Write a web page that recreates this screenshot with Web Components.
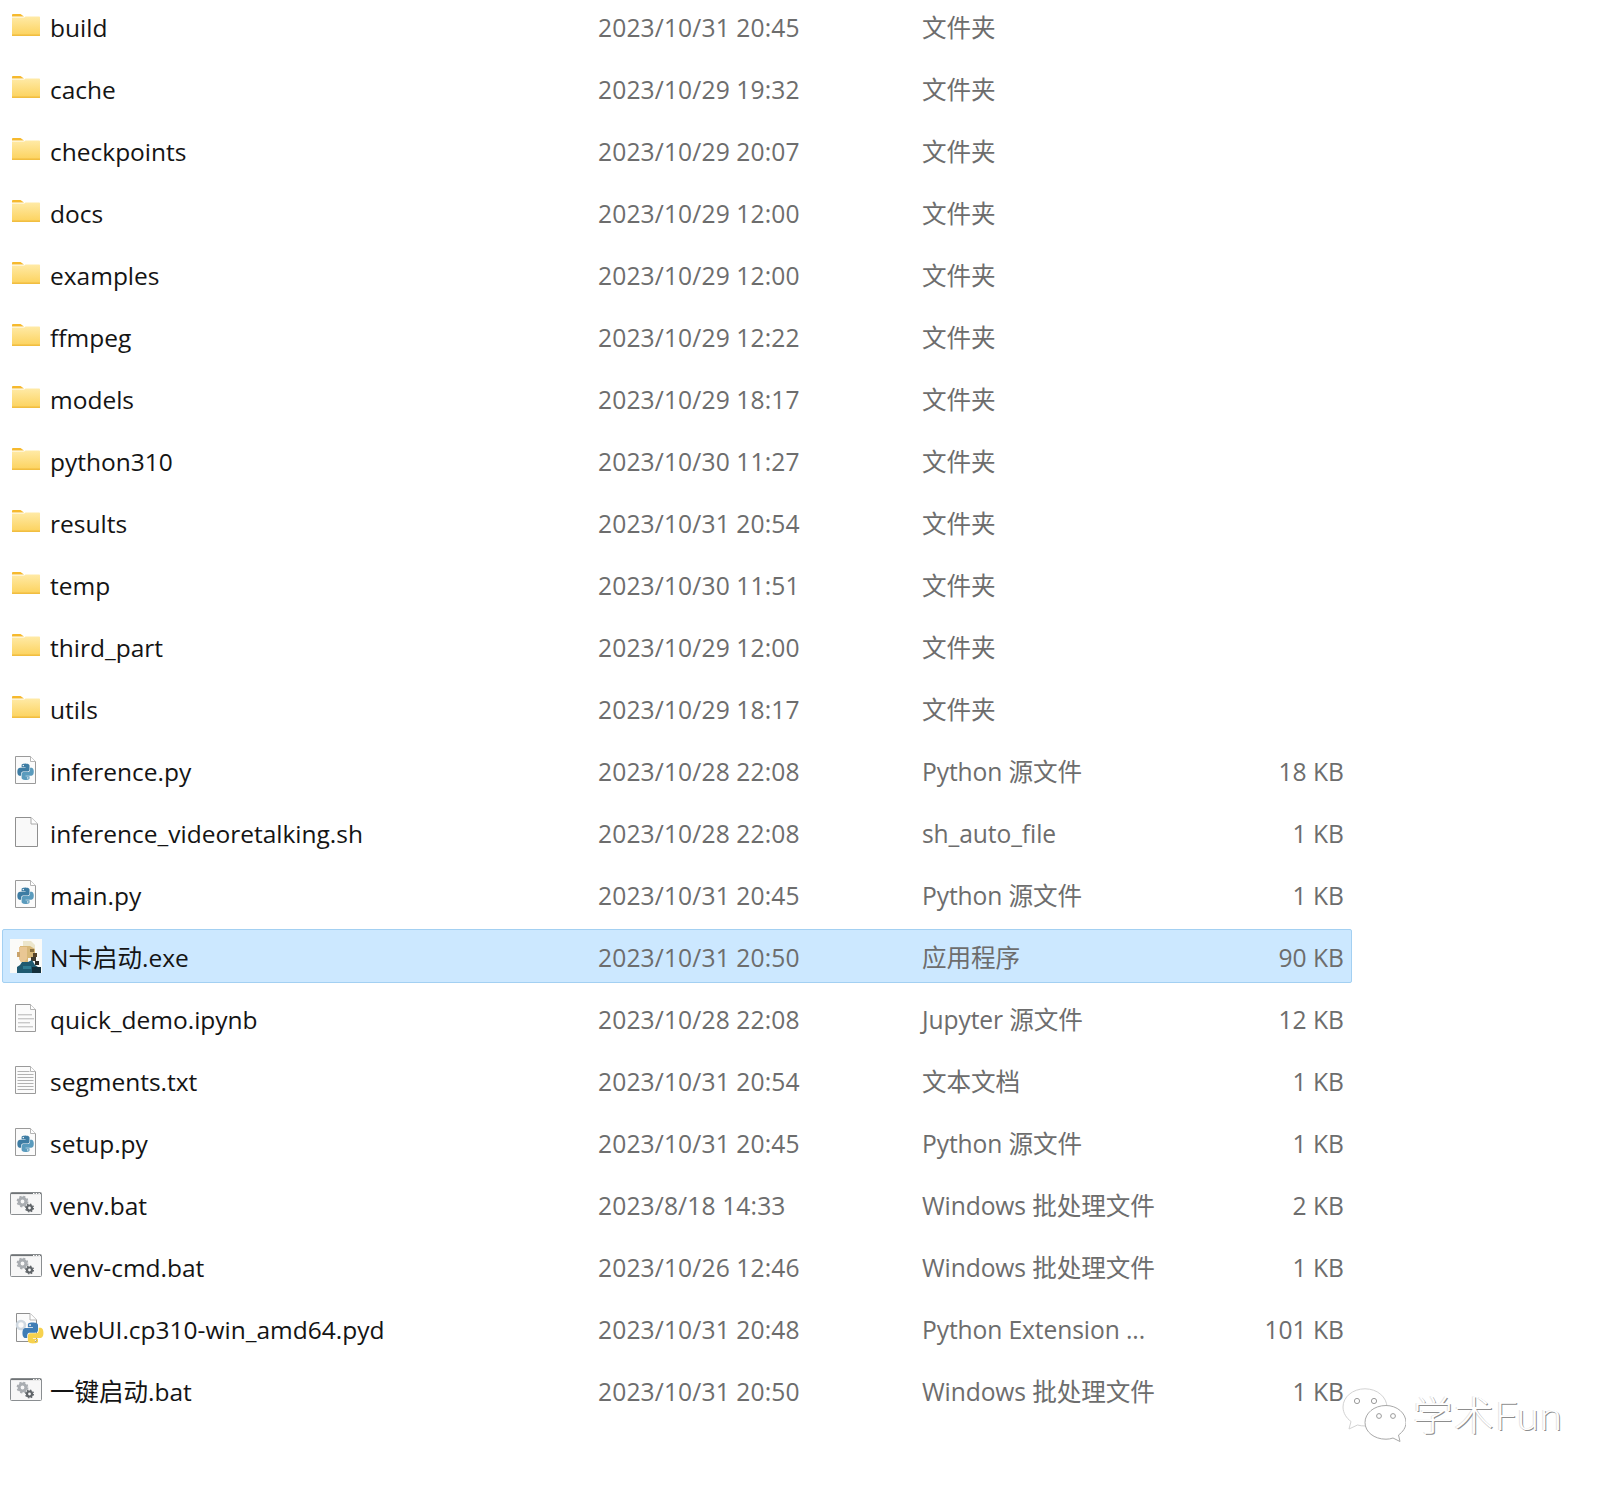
<!DOCTYPE html>
<html lang="zh">
<head>
<meta charset="utf-8">
<title>files</title>
<style>
  html,body{margin:0;padding:0;background:#fff;}
  body{width:1615px;height:1489px;overflow:hidden;position:relative;font-family:"Open Sans","Noto Sans CJK SC",sans-serif;}
</style>
</head>
<body>
<file-list>
  <file-row icon="folder" date="2023/10/31 20:45" type="文件夹">build</file-row>
  <file-row icon="folder" date="2023/10/29 19:32" type="文件夹">cache</file-row>
  <file-row icon="folder" date="2023/10/29 20:07" type="文件夹">checkpoints</file-row>
  <file-row icon="folder" date="2023/10/29 12:00" type="文件夹">docs</file-row>
  <file-row icon="folder" date="2023/10/29 12:00" type="文件夹">examples</file-row>
  <file-row icon="folder" date="2023/10/29 12:22" type="文件夹">ffmpeg</file-row>
  <file-row icon="folder" date="2023/10/29 18:17" type="文件夹">models</file-row>
  <file-row icon="folder" date="2023/10/30 11:27" type="文件夹">python310</file-row>
  <file-row icon="folder" date="2023/10/31 20:54" type="文件夹">results</file-row>
  <file-row icon="folder" date="2023/10/30 11:51" type="文件夹">temp</file-row>
  <file-row icon="folder" date="2023/10/29 12:00" type="文件夹">third_part</file-row>
  <file-row icon="folder" date="2023/10/29 18:17" type="文件夹">utils</file-row>
  <file-row icon="py" date="2023/10/28 22:08" type="Python 源文件" size="18 KB">inference.py</file-row>
  <file-row icon="blank" date="2023/10/28 22:08" type="sh_auto_file" size="1 KB">inference_videoretalking.sh</file-row>
  <file-row icon="py" date="2023/10/31 20:45" type="Python 源文件" size="1 KB">main.py</file-row>
  <file-row icon="exe" selected date="2023/10/31 20:50" type="应用程序" size="90 KB">N卡启动.exe</file-row>
  <file-row icon="doc" date="2023/10/28 22:08" type="Jupyter 源文件" size="12 KB">quick_demo.ipynb</file-row>
  <file-row icon="txt" date="2023/10/31 20:54" type="文本文档" size="1 KB">segments.txt</file-row>
  <file-row icon="py" date="2023/10/31 20:45" type="Python 源文件" size="1 KB">setup.py</file-row>
  <file-row icon="bat" date="2023/8/18 14:33" type="Windows 批处理文件" size="2 KB">venv.bat</file-row>
  <file-row icon="bat" date="2023/10/26 12:46" type="Windows 批处理文件" size="1 KB">venv-cmd.bat</file-row>
  <file-row icon="pyd" date="2023/10/31 20:48" type="Python Extension ..." size="101 KB">webUI.cp310-win_amd64.pyd</file-row>
  <file-row icon="bat" date="2023/10/31 20:50" type="Windows 批处理文件" size="1 KB">一键启动.bat</file-row>
</file-list>
<wechat-mark>学术Fun</wechat-mark>

<script>
// python logo halves, 24x24 box
const SNAKE_A = "M14.25.18l.9.2.73.26.59.3.45.32.34.34.25.34.16.33.1.3.04.26.02.2-.01.13V8.5l-.05.63-.13.55-.21.46-.26.38-.3.31-.33.25-.35.19-.35.14-.33.1-.3.07-.26.04-.21.02H8.77l-.69.05-.59.14-.5.22-.41.27-.33.32-.27.35-.2.36-.15.37-.1.35-.07.32-.04.27-.02.21v3.06H3.17l-.21-.03-.28-.07-.32-.12-.35-.18-.36-.26-.36-.36-.35-.46-.32-.59-.28-.73-.21-.88-.14-1.05-.05-1.23.06-1.22.16-1.04.24-.87.32-.71.36-.57.4-.44.42-.33.42-.24.4-.16.36-.1.32-.05.24-.01h.16l.06.01h8.16v-.83H6.18l-.01-2.75-.02-.37.05-.34.11-.31.17-.28.25-.26.31-.23.38-.2.44-.18.51-.15.58-.12.64-.1.71-.06.77-.04.84-.02 1.27.05zm-6.3 1.98l-.23.33-.08.41.08.41.23.34.33.22.41.09.41-.09.33-.22.23-.34.08-.41-.08-.41-.23-.33-.33-.22-.41-.09-.41.09z";
const SNAKE_B = "M21.04 6.11l.28.06.32.12.35.18.36.27.36.35.35.47.32.59.28.73.21.88.14 1.04.05 1.23-.06 1.23-.16 1.04-.24.86-.32.71-.36.57-.4.45-.42.33-.42.24-.4.16-.36.09-.32.05-.24.02-.16-.01h-8.22v.82h5.84l.01 2.76.02.36-.05.34-.11.31-.17.29-.25.25-.31.24-.38.2-.44.17-.51.15-.58.13-.64.09-.71.07-.77.04-.84.01-1.27-.04-1.07-.14-.9-.2-.73-.25-.59-.3-.45-.33-.34-.34-.25-.34-.16-.33-.1-.3-.04-.25-.02-.2.01-.13v-5.34l.05-.64.13-.54.21-.46.26-.38.3-.32.33-.24.35-.2.35-.14.33-.1.3-.06.26-.04.21-.02.13-.01h5.84l.69-.05.59-.14.5-.21.41-.28.33-.32.27-.35.2-.36.15-.36.1-.35.07-.32.04-.28.02-.21V6.07h2.09l.14.01zm-6.47 14.25l-.23.33-.08.41.08.41.23.33.33.23.41.08.41-.08.33-.23.23-.33.08-.41-.08-.41-.23-.33-.33-.23-.41-.08-.41.08z";

function sheet(body){
  // page with folded corner
  return `<path d="M7.500 4.500H22.500L27.500 9.500V31.500H7.500Z" fill="#fbfbfb" stroke="#9a9a9a"/>
    <path d="M22.500 4.500V9.500H27.500" fill="#fff" stroke="#b5b5b5"/>${body}`;
}
const GEARS = `<circle cx="14.500" cy="15.500" r="3.400" fill="none" stroke="#a9adb1" stroke-width="3"/>
  <circle cx="14.500" cy="15.500" r="5.200" fill="none" stroke="#a9adb1" stroke-width="1.400" stroke-dasharray="2.200 1.900"/>
  <circle cx="21.500" cy="22" r="2.500" fill="none" stroke="#5f6468" stroke-width="2.200"/>
  <circle cx="21.500" cy="22" r="3.900" fill="none" stroke="#5f6468" stroke-width="1.200" stroke-dasharray="1.600 1.460"/>`;

const ICONS = {
  folder:`<defs><linearGradient id="f" x1="0" y1="0" x2="0" y2="1"><stop offset="0" stop-color="#ffeaa6"/><stop offset="1" stop-color="#fcd25c"/></linearGradient></defs>
    <path d="M4 7.200C4 6.500 4.500 6 5.200 6H12.500L16 8.600H4Z" fill="#f6b92d"/>
    <path d="M4 9.400H16.200L17.400 8.600H31C31.600 8.600 32 9 32 9.600V27C32 27.600 31.600 28 31 28H5C4.400 28 4 27.600 4 27Z" fill="url(#f)"/>
    <path d="M4 27.200H32" stroke="#f0bb3e" stroke-width="1.400"/>`,
  py:sheet(`<g transform="translate(9.400 11.600) scale(.68)"><path d="${SNAKE_A}" fill="#3d7ca3"/><path d="${SNAKE_B}" fill="#5a9bbd"/></g>`),
  blank:`<path d="M7.500 3.500H23L29.500 10V32.500H7.500Z" fill="#f9f9f9" stroke="#8f8f8f"/><path d="M23 3.500V10H29.500" fill="#fff" stroke="#a8a8a8"/>`,
  doc:sheet(`<g fill="#c9c9c9"><rect x="10" y="14" width="14" height="1.400"/><rect x="10" y="18" width="16" height="1.400"/><rect x="10" y="22" width="12" height="1.400"/><rect x="10" y="26" width="15" height="1.400"/></g>`),
  txt:sheet(`<g fill="#b2b2b2"><rect x="9.500" y="9" width="12" height="1"/><rect x="9.500" y="12" width="16" height="1"/><rect x="9.500" y="15" width="16" height="1"/><rect x="9.500" y="18" width="16" height="1"/><rect x="9.500" y="21" width="16" height="1"/><rect x="9.500" y="24" width="16" height="1"/><rect x="9.500" y="27" width="16" height="1"/></g>`),
  bat:`<rect x="2.500" y="6.500" width="31" height="22" rx="1" fill="#f7f7f7" stroke="#8a8e91"/><path d="M3 7.500H33" stroke="#6f7376" stroke-width="1.200"/><path d="M25 7.500H33" stroke="#fff" stroke-dasharray="1.500 1.200"/>${GEARS}`,
  pyd:`<path d="M8.500 3.500H22L28.500 10V31.500H8.500Z" fill="#fbfbfb" stroke="#8f8f8f"/><path d="M22 3.500V10H28.500" fill="#fff" stroke="#b5b5b5"/>
    <circle cx="13" cy="15" r="4" fill="none" stroke="#cfd8e0" stroke-width="2.600"/>
    <g transform="translate(14.500 12.500) scale(.87)"><path d="${SNAKE_A}" fill="#3f7db5"/><path d="${SNAKE_B}" fill="#f7d24e"/></g>`,
  exe:`<rect x="2" y="1" width="32" height="34" fill="#fbfbf8"/>
    <path d="M15 3H23L27 7V11H15Z" fill="#ece6cc"/>
    <path d="M12 8H22L27 11V17L24 20H20V24H13L11 20Z" fill="#d8b878"/>
    <path d="M11 9H19V21L16 24H13L11 21Z" fill="#e9c794"/>
    <rect x="9" y="14" width="3" height="5" fill="#c9a36a"/>
    <rect x="22" y="11" width="4" height="3" fill="#8a7140"/><rect x="25" y="15" width="4" height="4" fill="#55442a"/>
    <rect x="23" y="19" width="5" height="4" fill="#3e3a2e"/><rect x="27" y="23" width="4" height="4" fill="#2a2a26"/>
    <path d="M14 24H20L24 22L27 27L33 31V35H9V29L12 27Z" fill="#1f5a70"/>
    <rect x="15" y="28" width="8" height="3" fill="#2f7c92"/><rect x="24" y="29" width="9" height="6" fill="#14303c"/>`
};

class FileIcon extends HTMLElement{
  constructor(){
    super();
    this.shadowDOM=this.attachShadow({mode:"open"});
  }
  connectedCallback(){
    this.shadowDOM.innerHTML=`<style>
      :host{display:block;width:36px;height:36px;flex:none;}
      svg{display:block;width:36px;height:36px;}
    </style>
    <svg viewBox="0 0 36 36">${ICONS[this.getAttribute("name")]||""}</svg>`;
  }
}
customElements.define("file-icon",FileIcon);

class FileRow extends HTMLElement{
  constructor(){
    super();
    this.shadowDOM=this.attachShadow({mode:"open"});
  }
  connectedCallback(){
    const date=this.getAttribute("date")||"";
    const type=this.getAttribute("type")||"";
    const size=this.getAttribute("size")||"";
    this.shadowDOM.innerHTML=`<style>
      :host{display:block;height:54px;box-sizing:border-box;border:1px solid transparent;border-radius:2px;
        font-size:24.6px;line-height:55px;white-space:nowrap;}
      :host([selected]){background:#cce8ff;border-color:#a3d0f2;}
      .row{display:grid;grid-template-columns:595px 324px 320px 102px;height:100%;}
      .name{display:flex;align-items:flex-start;gap:6px;padding-left:5px;color:#141414;font-size:24.5px;}
      file-icon{margin-top:8px;}
      .date,.type,.size{color:#6d6d6d;}
      .date{letter-spacing:.13px;}
      .type{letter-spacing:-.1px;}
      .size{text-align:right;}
    </style>
    <div class="row">
      <div class="name"><file-icon name="${this.getAttribute("icon")}"></file-icon><span><slot></slot></span></div>
      <div class="date">${date}</div>
      <div class="type">${type}</div>
      <div class="size">${size}</div>
    </div>`;
  }
}
customElements.define("file-row",FileRow);

class FileList extends HTMLElement{
  constructor(){
    super();
    this.shadowDOM=this.attachShadow({mode:"open"});
  }
  connectedCallback(){
    this.shadowDOM.innerHTML=`<style>
      :host{display:flex;flex-direction:column;gap:8px;width:1350px;margin:-1px 0 0 2px;}
    </style><slot></slot>`;
  }
}
customElements.define("file-list",FileList);

class WechatMark extends HTMLElement{
  constructor(){
    super();
    this.shadowDOM=this.attachShadow({mode:"open"});
  }
  connectedCallback(){
    this.shadowDOM.innerHTML=`<style>
      :host{position:absolute;left:1342px;top:1388px;display:flex;align-items:center;gap:7px;height:54px;}
      svg{display:block;width:64px;height:54px;flex:none;}
      span{font-family:"Lato","Noto Sans CJK SC",sans-serif;font-weight:300;font-size:40px;letter-spacing:1px;line-height:54px;
        color:#fff;text-shadow:1px 1px 0 #8d8d8d,-1px 0 0 #e4e4e4;}
    </style>
    <svg viewBox="0 0 64 54">
      <g fill="#fff" stroke="#d2d2d2" stroke-width="1">
        <path d="M23 .8C10.800 .8 1 8.900 1 19C1 25 4.500 30.200 9 33.500L7 41L15.500 37C18 37.700 20.500 38 23 38C35.200 38 45 29.900 45 19.500C45 9 35.200 .8 23 .8Z"/>
        <path d="M44 17.500C32 17.500 23 25.200 23 34.500C23 43.800 32 51.200 44 51.200C46.500 51.200 49 50.800 51 50L58 53.500L56.500 47C60.800 44 64 39.500 64 34.500C64 25.200 55 17.500 44 17.500Z" stroke="#a8a8a8"/>
      </g>
      <g fill="#fff" stroke="#9a9a9a" stroke-width="1">
        <circle cx="15" cy="13" r="2.600"/><circle cx="32" cy="13" r="2.600"/>
        <circle cx="37" cy="28" r="2.400"/><circle cx="51" cy="28" r="2.400"/>
      </g>
    </svg>
    <span><slot></slot></span>`;
  }
}
customElements.define("wechat-mark",WechatMark);
</script>
</body>
</html>
